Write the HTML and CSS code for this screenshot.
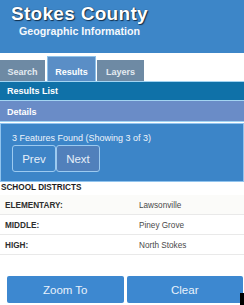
FILE: index.html
```html
<!DOCTYPE html>
<html>
<head>
<meta charset="utf-8">
<link rel="stylesheet" href="styles.css">
</head>
<body>
<div class="page">
  <header class="header">
    <div class="title">Stokes County</div>
    <div class="subtitle">Geographic Information</div>
  </header>
  <nav class="tabs">
    <div class="tab">Search</div>
    <div class="tab active">Results</div>
    <div class="tab layers">Layers</div>
  </nav>
  <div class="bar list-bar">Results List</div>
  <div class="bar details-bar">Details</div>
  <div class="gap"></div>
  <section class="found">
    <div class="found-text">3 Features Found (Showing 3 of 3)</div>
    <div class="pager">
      <button class="pbtn prev">Prev</button>
      <button class="pbtn next">Next</button>
    </div>
  </section>
  <div class="group-title">SCHOOL DISTRICTS</div>
  <div class="rows">
    <div class="row first"><span class="label">ELEMENTARY:</span><span class="value">Lawsonville</span></div>
    <div class="row"><span class="label">MIDDLE:</span><span class="value">Piney Grove</span></div>
    <div class="row"><span class="label">HIGH:</span><span class="value">North Stokes</span></div>
  </div>
  <div class="actions">
    <button class="abtn">Zoom To</button>
    <button class="abtn">Clear</button>
  </div>
  <div class="corner"></div>
</div>
</body>
</html>
```

FILE: styles.css
```css
html, body {
  margin: 0;
  padding: 0;
  background: #ffffff;
}
body {
  font-family: "Liberation Sans", Arial, sans-serif;
  width: 244px;
  height: 305px;
  overflow: hidden;
}
.page {
  position: relative;
  width: 244px;
  height: 305px;
}
.header {
  height: 53px;
  box-sizing: border-box;
  background: #3d86c8;
  padding: 4px 0 0 11px;
  color: #ffffff;
}
.title {
  font-size: 19px;
  font-weight: bold;
  line-height: 19px;
  letter-spacing: 0.3px;
  text-shadow: 0 0 1px #10283f, 1px 1px 1px #13304c;
}
.subtitle {
  font-size: 10.7px;
  font-weight: bold;
  line-height: 12px;
  margin: 2px 0 0 8px;
  color: #f4f8fc;
}
.tabs {
  display: flex;
  align-items: flex-end;
  height: 28px;
  background: #ffffff;
}
.tab {
  box-sizing: border-box;
  height: 21px;
  width: 45px;
  display: flex;
  align-items: flex-end;
  justify-content: center;
  padding-bottom: 3px;
  font-size: 9px;
  font-weight: bold;
  line-height: 12px;
  color: #e4ebf1;
  background: #6e8aa4;
}
.tab.active {
  height: 25px;
  width: 49px;
  margin: 0 1px 0 2px;
  background: #5a8ec6;
  border: 1px solid #8fc2ea;
  border-bottom: none;
  color: #ffffff;
}
.tab.layers {
  width: 47px;
}
.bar {
  box-sizing: border-box;
  font-size: 9px;
  font-weight: bold;
  color: #ffffff;
  padding-left: 7px;
}
.list-bar {
  height: 20px;
  padding-top: 1px;
  line-height: 17px;
  background: #0f71a8;
  border-top: 1px solid #a2d4f2;
  border-bottom: 1px solid #a2d4f2;
}
.details-bar {
  height: 21px;
  padding-top: 3px;
  line-height: 17px;
  background: #6a8cc7;
  border-bottom: 1px solid #a2d4f2;
}
.gap {
  height: 1px;
  background: #ffffff;
}
.found {
  box-sizing: border-box;
  height: 59px;
  background: #3c85c8;
  border: 1px solid #91c4ee;
  padding: 9px 0 0 11px;
}
.found-text {
  font-size: 9px;
  line-height: 11px;
  color: #eef4fb;
}
.pager {
  display: flex;
  margin-top: 1px;
}
.pbtn {
  box-sizing: border-box;
  width: 44px;
  height: 27px;
  margin: 0;
  padding: 0;
  border: 1px solid #9ccaf0;
  border-radius: 3px;
  font-family: "Liberation Sans", Arial, sans-serif;
  font-size: 11.5px;
  color: #e6eff9;
  display: flex;
  align-items: center;
  justify-content: center;
}
.prev {
  background: #3e84c6;
}
.next {
  background: #5180bb;
}
.group-title {
  font-size: 8.2px;
  font-weight: bold;
  line-height: 10px;
  color: #1e1e1e;
  padding-left: 1px;
  margin-top: 1px;
}
.rows {
  margin-top: 2px;
}
.row {
  display: grid;
  grid-template-columns: 139px 1fr;
  padding-top: 2px;
  line-height: 17px;
  border-bottom: 1px solid #e9e9e9;
  font-size: 8.2px;
}
.row.first {
  background: #fbfbf9;
}
.label {
  padding-left: 5px;
  font-weight: bold;
  color: #2e2e2e;
}
.value {
  color: #4a4a4a;
}
.actions {
  display: flex;
  gap: 3px;
  margin-top: 21px;
  padding: 0 1px 0 7px;
}
.abtn {
  flex: 1;
  height: 27px;
  margin: 0;
  padding: 0;
  border: none;
  border-radius: 2px;
  background: #3d88d0;
  color: #e8f1fb;
  font-family: "Liberation Sans", Arial, sans-serif;
  font-size: 11.5px;
}
.corner {
  position: absolute;
  right: 0;
  bottom: 0;
  width: 4px;
  height: 12px;
  background: #000000;
}
```
